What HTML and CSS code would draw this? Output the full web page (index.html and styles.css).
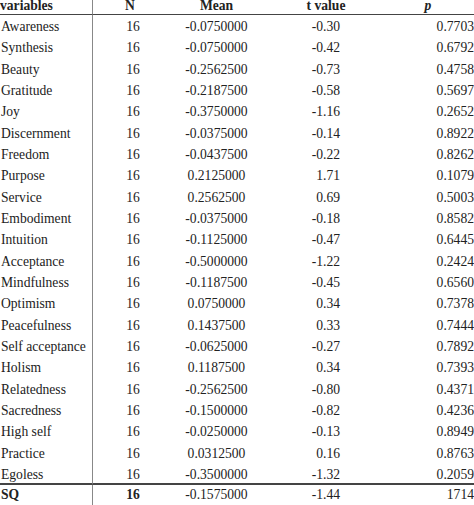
FILE: index.html
```html
<!DOCTYPE html>
<html lang="en">
<head>
  <meta charset="UTF-8">
  <meta name="viewport" content="width=device-width, initial-scale=1.0">
  <title>One-sample t test by variable</title>
  <link rel="stylesheet" href="styles.css">
</head>
<body>
  <div class="stats">
    <!-- Header -->
    <div class="row head">
      <div class="var">variables</div>
      <div class="n">N</div>
      <div class="mean">Mean</div>
      <div class="t">t value</div>
      <div class="p"><i>p</i></div>
    </div>

    <div class="row"><div class="var">Awareness</div><div class="n">16</div><div class="mean">-0.0750000</div><div class="t">-0.30</div><div class="p">0.7703</div></div>
    <div class="row"><div class="var">Synthesis</div><div class="n">16</div><div class="mean">-0.0750000</div><div class="t">-0.42</div><div class="p">0.6792</div></div>
    <div class="row"><div class="var">Beauty</div><div class="n">16</div><div class="mean">-0.2562500</div><div class="t">-0.73</div><div class="p">0.4758</div></div>
    <div class="row"><div class="var">Gratitude</div><div class="n">16</div><div class="mean">-0.2187500</div><div class="t">-0.58</div><div class="p">0.5697</div></div>
    <div class="row"><div class="var">Joy</div><div class="n">16</div><div class="mean">-0.3750000</div><div class="t">-1.16</div><div class="p">0.2652</div></div>
    <div class="row"><div class="var">Discernment</div><div class="n">16</div><div class="mean">-0.0375000</div><div class="t">-0.14</div><div class="p">0.8922</div></div>
    <div class="row"><div class="var">Freedom</div><div class="n">16</div><div class="mean">-0.0437500</div><div class="t">-0.22</div><div class="p">0.8262</div></div>
    <div class="row"><div class="var">Purpose</div><div class="n">16</div><div class="mean">0.2125000</div><div class="t">1.71</div><div class="p">0.1079</div></div>
    <div class="row"><div class="var">Service</div><div class="n">16</div><div class="mean">0.2562500</div><div class="t">0.69</div><div class="p">0.5003</div></div>
    <div class="row"><div class="var">Embodiment</div><div class="n">16</div><div class="mean">-0.0375000</div><div class="t">-0.18</div><div class="p">0.8582</div></div>
    <div class="row"><div class="var">Intuition</div><div class="n">16</div><div class="mean">-0.1125000</div><div class="t">-0.47</div><div class="p">0.6445</div></div>
    <div class="row"><div class="var">Acceptance</div><div class="n">16</div><div class="mean">-0.5000000</div><div class="t">-1.22</div><div class="p">0.2424</div></div>
    <div class="row"><div class="var">Mindfulness</div><div class="n">16</div><div class="mean">-0.1187500</div><div class="t">-0.45</div><div class="p">0.6560</div></div>
    <div class="row"><div class="var">Optimism</div><div class="n">16</div><div class="mean">0.0750000</div><div class="t">0.34</div><div class="p">0.7378</div></div>
    <div class="row"><div class="var">Peacefulness</div><div class="n">16</div><div class="mean">0.1437500</div><div class="t">0.33</div><div class="p">0.7444</div></div>
    <div class="row"><div class="var">Self acceptance</div><div class="n">16</div><div class="mean">-0.0625000</div><div class="t">-0.27</div><div class="p">0.7892</div></div>
    <div class="row"><div class="var">Holism</div><div class="n">16</div><div class="mean">0.1187500</div><div class="t">0.34</div><div class="p">0.7393</div></div>
    <div class="row"><div class="var">Relatedness</div><div class="n">16</div><div class="mean">-0.2562500</div><div class="t">-0.80</div><div class="p">0.4371</div></div>
    <div class="row"><div class="var">Sacredness</div><div class="n">16</div><div class="mean">-0.1500000</div><div class="t">-0.82</div><div class="p">0.4236</div></div>
    <div class="row"><div class="var">High self</div><div class="n">16</div><div class="mean">-0.0250000</div><div class="t">-0.13</div><div class="p">0.8949</div></div>
    <div class="row"><div class="var">Practice</div><div class="n">16</div><div class="mean">0.0312500</div><div class="t">0.16</div><div class="p">0.8763</div></div>
    <div class="row last"><div class="var">Egoless</div><div class="n">16</div><div class="mean">-0.3500000</div><div class="t">-1.32</div><div class="p">0.2059</div></div>

    <!-- Total -->
    <div class="row total">
      <div class="var">SQ</div>
      <div class="n">16</div>
      <div class="mean">-0.1575000</div>
      <div class="t">-1.44</div>
      <div class="p">1714</div>
    </div>
  </div>
</body>
</html>
```

FILE: styles.css
```css
body {
  margin: 0;
  background-color: #fff;
  font-family: "Liberation Serif", "Times New Roman", serif;
  font-size: 13.6px;
  color: #222;
}

.stats {
  width: 474px;
  overflow: hidden;
}

.row {
  display: grid;
  grid-template-columns: 93px 78px 91px 128px 84px;
  height: 21.35px;
  line-height: 15px;
  white-space: nowrap;
}

.row > div {
  box-sizing: border-box;
  padding-top: 3.9px;
}

/* first column with the grey rule on its right */
.var {
  padding-left: 1px;
  border-right: 1px solid #888;
}

.n,
.mean {
  text-align: center;
}

.n {
  padding-left: 2px;
}

.t {
  text-align: right;
  padding-right: 50px;
}

.p {
  text-align: right;
}

/* Header row */
.head {
  height: 15px;
  line-height: 11px;
  font-weight: bold;
}

.head > div {
  padding-top: 0.3px;
  border-bottom: 1px solid #444;
}

.head .var {
  padding-left: 0;
}

.head .n {
  padding-left: 0;
  padding-right: 4px;
}

.head .t {
  text-align: center;
  padding-right: 0;
}

.head .p {
  text-align: center;
  padding-right: 8px;
}

/* Heavier rule above the total */
.last > div {
  border-bottom: 2px solid #444;
}

.total {
  height: 20.3px;
}

.total > div {
  padding-top: 2.2px;
}

.total .var,
.total .n {
  font-weight: bold;
}
```
